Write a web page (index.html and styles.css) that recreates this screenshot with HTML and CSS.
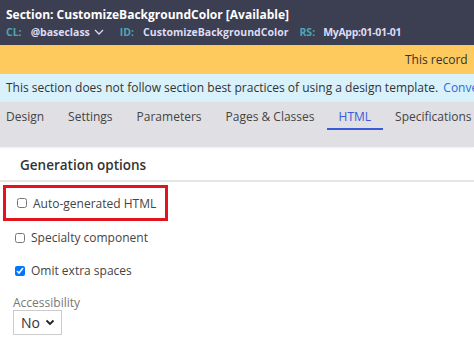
FILE: index.html
```
<!doctype html>
<html>
  <head>
    <meta charset="UTF-8" />
    <title>Section: CustomizeBackgroundColor</title>
    <link rel="stylesheet" href="styles.css">
  </head>
  <body>
    <div class="header">
      <div class="title">Section: CustomizeBackgroundColor [Available]</div>
      <div class="meta">
        <span class="key">CL:</span>
        <span class="val">@baseclass</span>
        <svg class="chev" width="10" height="6" viewBox="0 0 10 6"><path d="M1 1l4 4 4-4" fill="none" stroke="#d8d9f0" stroke-width="1.3"/></svg>
        <span class="key gap">ID:</span>
        <span class="val">CustomizeBackgroundColor</span>
        <span class="key gap short">RS:</span>
        <span class="val version">MyApp:01-01-01</span>
      </div>
    </div>

    <div class="notice">This record</div>
    <div class="info">This section does not follow section best practices of using a design template. <a href="#">Convert</a></div>

    <div class="tabs">
      <span class="tab">Design</span>
      <span class="tab">Settings</span>
      <span class="tab">Parameters</span>
      <span class="tab">Pages &amp; Classes</span>
      <span class="tab active">HTML</span>
      <span class="tab">Specifications</span>
    </div>

    <div class="content">
      <div class="group-title">Generation options</div>
      <div class="options">
        <label class="option highlight"><input type="checkbox" /> Auto-generated HTML</label>
        <label class="option"><input type="checkbox" /> Specialty component</label>
        <label class="option"><input type="checkbox" checked /> Omit extra spaces</label>
      </div>
      <div class="field">
        <div class="field-label">Accessibility</div>
        <div class="select">No
          <svg width="10" height="7" viewBox="0 0 10 7"><path d="M1.5 1.5l3.5 3.5 3.5-3.5" fill="none" stroke="#222" stroke-width="1.8"/></svg>
        </div>
      </div>
    </div>
  </body>
</html>
```
FILE: styles.css
```
* {
  box-sizing: border-box;
}

body {
  margin: 0;
  width: 474px;
  height: 340px;
  overflow: hidden;
  font-family: "Open Sans", "Noto Sans", sans-serif;
  font-size: 12px;
  color: #333;
  background: #fff;
}

.header {
  height: 45px;
  background-color: #3c3e51;
  padding: 6px 6px 0;
  white-space: nowrap;
}

.header .title {
  color: #fff;
  font-weight: bold;
  font-size: 12px;
  line-height: 17px;
}

.header .meta {
  display: flex;
  align-items: center;
  font-size: 10.5px;
  line-height: 18px;
  font-weight: bold;
}

.header .key {
  color: #4fa6b3;
  margin-right: 9px;
}

.header .key.gap {
  margin-left: 16px;
}

.header .key.short {
  margin-left: 11px;
  margin-right: 8px;
}

.header .val {
  color: #dcdcf4;
}

.header .version {
  letter-spacing: -0.3px;
}

.header .chev {
  margin-left: 4px;
}

.notice {
  height: 29px;
  line-height: 29px;
  background-color: #fec95d;
  color: #333;
  padding-left: 405px;
  white-space: nowrap;
  overflow: hidden;
}

.info {
  height: 28px;
  line-height: 28px;
  background-color: #d8f1fb;
  color: #333;
  padding-left: 6px;
  white-space: nowrap;
  overflow: hidden;
}

.info a {
  color: #2e6cd1;
  text-decoration: none;
  margin-left: 2px;
}

.tabs {
  height: 45px;
  background-color: #e0e0e4;
  display: flex;
  white-space: nowrap;
  box-shadow: 0 1px 2px rgba(0, 0, 0, 0.08);
}

.tab {
  padding: 6px 12px 2px;
  line-height: 18px;
  height: 28px;
  color: #444;
}

.tab:first-child {
  margin-left: -6px;
}

.tab.active {
  color: #3a5ad9;
  border-bottom: 2px solid #3a5ad9;
}

.group-title {
  font-size: 13.5px;
  font-weight: 600;
  color: #333;
  padding: 9px 20px 0;
  height: 35px;
  border-bottom: 2px solid #e6e6e6;
}

.options {
  padding: 3px 3px 0;
}

.option {
  display: flex;
  align-items: center;
  height: 33px;
  padding-left: 10px;
  color: #444;
}

.option input {
  margin: 0 6px 0 2px;
  width: 10px;
  height: 10px;
}

.option.highlight {
  width: 165px;
  height: 36px;
  border: 3px solid #e4141e;
  padding-left: 9px;
}

.field {
  padding: 8px 13px 0;
}

.field-label {
  font-size: 12px;
  color: #777;
  line-height: 15px;
}

.select {
  width: 49px;
  height: 25px;
  border: 1px solid #ccc;
  display: flex;
  align-items: center;
  justify-content: space-between;
  padding: 0 6px 0 7px;
  font-size: 14px;
  color: #333;
}
```
